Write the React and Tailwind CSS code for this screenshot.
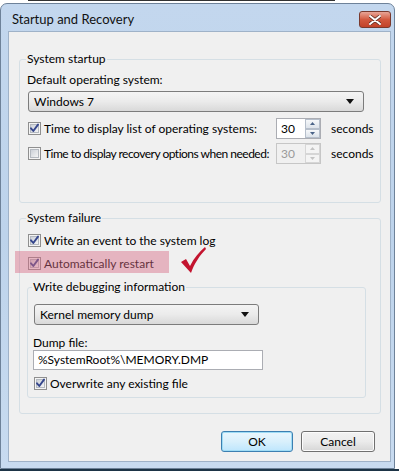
import React from "react";

const CheckBox = ({ checked, disabled }) => (
  <svg width="13" height="13" viewBox="0 0 13 13" className="shrink-0">
    <defs>
      <linearGradient id="cbg" x1="0" y1="0" x2="1" y2="1">
        <stop offset="0" stopColor="#c9ced6" />
        <stop offset="1" stopColor="#f7f7f7" />
      </linearGradient>
    </defs>
    <rect x="0.5" y="0.5" width="12" height="12" fill="#f4f4f4" stroke="#8f8f8f" />
    <rect x="2.5" y="2.5" width="8" height="8" fill="url(#cbg)" stroke="#b4b9c0" />
    {checked && (
      <path
        d="M3 6.3 L5.3 9 L10 2.6"
        fill="none"
        stroke={disabled ? "#9aa" : "#35468c"}
        strokeWidth="1.9"
        strokeLinecap="round"
        strokeLinejoin="round"
      />
    )}
  </svg>
);

const Dropdown = ({ text, className }) => (
  <div
    className={`flex items-center justify-between h-[21px] border border-[#7c7c7c] rounded-[3px] bg-gradient-to-b from-[#f4f4f4] via-[#ebebeb] to-[#d9d9d9] pl-[5px] pr-[9px] ${className}`}
  >
    <span>{text}</span>
    <svg width="8" height="5" viewBox="0 0 8 5">
      <path d="M0 0 H8 L4 5 Z" fill="#111" />
    </svg>
  </div>
);

const Spin = ({ value, disabled }) => (
  <div
    className={`flex shrink-0 h-[21px] w-[45px] border ${
      disabled ? "border-[#c6c6c6] bg-[#f0f0f0] text-[#9a9a9a]" : "border-[#abadb3] bg-white"
    }`}
  >
    <span className="flex-1 pl-[4px] leading-[19px]">{value}</span>
    <div className="flex flex-col w-[15px]">
      {[0, 1].map((i) => (
        <div
          key={i}
          className={`flex-1 flex items-center justify-center border ${
            disabled
              ? "border-[#d6d6d6] bg-[#f4f4f4]"
              : "border-[#b6bfcb] bg-gradient-to-b from-[#f6f8fa] to-[#dde3ea]"
          }`}
        >
          <svg width="5" height="3" viewBox="0 0 5 3">
            <path
              d={i === 0 ? "M0 3 L2.5 0 L5 3 Z" : "M0 0 L5 0 L2.5 3 Z"}
              fill={disabled ? "#c4c4c4" : "#4a6388"}
            />
          </svg>
        </div>
      ))}
    </div>
  </div>
);

const Legend = ({ children, className = "" }) => (
  <span className={`self-start -mt-[9px] px-[1px] bg-[#f0f0f0] leading-[15px] ${className}`}>
    {children}
  </span>
);

export default function App() {
  return (
    <div
      className="relative w-[399px] h-[471px] bg-white overflow-hidden text-[12px] text-black whitespace-nowrap"
      style={{ fontFamily: 'Lato, "Noto Sans", sans-serif' }}
    >
      <div className="h-[3px] pl-[28px]">
        <div className="w-[307px] h-[1px] bg-[#333]" />
      </div>
      <div className="flex flex-col w-[395px] h-[466px] rounded-t-[7px] border border-[#6e8299] bg-gradient-to-b from-[#c3d7ee] via-[#bdd3eb] to-[#c8dbf0]">
        <div className="flex h-[27px] shrink-0">
          <span className="pl-[11px] pt-[7px] text-[13px] leading-[16px] text-[#111]">
            Startup and Recovery
          </span>
          <div className="ml-auto mr-[3px] mt-[7px] w-[32px] h-[17px] rounded-[3px] border border-[#7a3a2e] bg-gradient-to-b from-[#e7a597] via-[#d2593f] to-[#c2432a] flex items-center justify-center">
            <svg width="12" height="10" viewBox="0 0 12 10">
              <path
                d="M1 1 L11 9 M11 1 L1 9"
                stroke="#5a2a20"
                strokeWidth="3.4"
                strokeLinecap="round"
              />
              <path
                d="M1 1 L11 9 M11 1 L1 9"
                stroke="#fff"
                strokeWidth="2"
                strokeLinecap="round"
              />
            </svg>
          </div>
        </div>
        <div className="flex-1 ml-[7px] mr-[3px] mb-[6px] border border-[#9fb2c8] bg-[#f0f0f0] px-[10px] flex flex-col">
          {/* System startup */}
          <div className="mt-[27px] w-[362px] h-[144px] border border-[#d5dfe5] rounded-[3px] flex flex-col shrink-0">
            <Legend className="ml-[6px]">System startup</Legend>
            <span className="ml-[7px] mt-[6px] leading-[15px]">Default operating system:</span>
            <Dropdown text="Windows 7" className="ml-[8px] mt-[4px] w-[336px]" />
            <div className="flex items-center ml-[8px] mt-[6px] h-[21px]">
              <CheckBox checked />
              <span className="ml-[3px] w-[232px] shrink-0">Time to display list of operating systems:</span>
              <Spin value="30" />
              <span className="ml-[10px]">seconds</span>
            </div>
            <div className="flex items-center ml-[8px] mt-[4px] h-[21px]">
              <CheckBox />
              <span className="ml-[3px] w-[232px] shrink-0 tracking-[-0.5px]">
                Time to display recovery options when needed:
              </span>
              <Spin value="30" disabled />
              <span className="ml-[10px]">seconds</span>
            </div>
          </div>

          {/* System failure */}
          <div className="mt-[15px] w-[362px] h-[196px] border border-[#d5dfe5] rounded-[3px] flex flex-col shrink-0">
            <Legend className="ml-[6px]">System failure</Legend>
            <div className="flex items-center ml-[8px] mt-[7px] h-[17px]">
              <CheckBox checked />
              <span className="ml-[3px]">Write an event to the system log</span>
            </div>
            <div className="relative flex items-center ml-[8px] mt-[6px] h-[17px]">
              <CheckBox checked />
              <span className="ml-[3px]">Automatically restart</span>
              <div className="absolute left-[-13px] top-[-4px] w-[154px] h-[22px] bg-[#d66a84]/45" />
              <svg
                className="absolute left-[152px] top-[-8px]"
                width="27"
                height="27"
                viewBox="0 0 27 27"
              >
                <path
                  d="M1 15 L6 12 L10 19 C14 11 19 5 25 0 L26 2 C20 8 14 17 11 26 Z"
                  fill="#c3142f"
                />
              </svg>
            </div>

            {/* Write debugging information */}
            <div className="mt-[15px] ml-[7px] w-[339px] h-[111px] border border-[#d5dfe5] rounded-[3px] flex flex-col">
              <Legend className="ml-[4px]">Write debugging information</Legend>
              <Dropdown text="Kernel memory dump" className="ml-[6px] mt-[10px] w-[225px]" />
              <span className="ml-[5px] mt-[10px] leading-[15px]">Dump file:</span>
              <div className="ml-[5px] w-[230px] h-[20px] border border-[#abadb3] bg-white pl-[4px] leading-[18px]">
                %SystemRoot%\MEMORY.DMP
              </div>
              <div className="flex items-center ml-[6px] mt-[5px] h-[17px]">
                <CheckBox checked />
                <span className="ml-[3px]">Overwrite any existing file</span>
              </div>
            </div>
          </div>

          <div className="flex gap-[8px] ml-[202px] mt-[17px]">
            <button className="w-[72px] h-[21px] rounded-[3px] border border-[#3c7fb1] bg-gradient-to-b from-[#eaf6fd] via-[#d9f0fc] to-[#bee6fd] shadow-[inset_0_0_0_1px_#9fdcf5]">
              OK
            </button>
            <button className="w-[74px] h-[21px] rounded-[3px] border border-[#707070] bg-gradient-to-b from-[#f2f2f2] via-[#ebebeb] to-[#d6d6d6] shadow-[inset_0_0_0_1px_#fcfcfc]">
              Cancel
            </button>
          </div>
        </div>
      </div>
      <div className="h-[2px] bg-[#1d3446]" />
    </div>
  );
}
